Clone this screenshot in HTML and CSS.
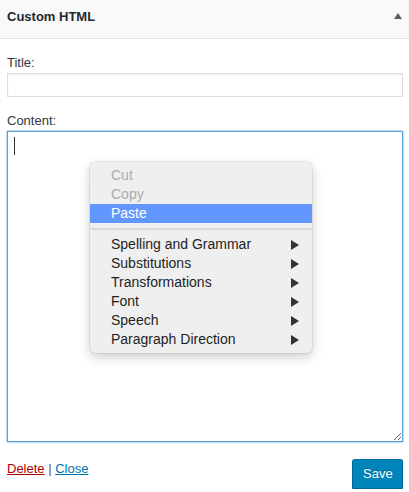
FILE: index.html
```html
<!DOCTYPE html>
<html lang="en">
<head>
<meta charset="utf-8">
<title>Custom HTML widget</title>
<link rel="stylesheet" href="styles.css">
</head>
<body>
<div class="widget">
  <div class="widget-top">
    <h3 class="widget-title">Custom HTML</h3>
    <svg class="toggle" width="8" height="6" viewBox="0 0 8 6" aria-hidden="true"><polygon points="4,0 8,6 0,6" fill="#555d66"/></svg>
  </div>
  <form class="widget-inside">
    <label class="field-label" for="title">Title:</label>
    <input class="field-input" id="title" type="text">
    <label class="field-label content-label" for="content">Content:</label>
    <div class="editor">
      <textarea class="field-textarea" id="content"></textarea>
      <span class="caret"></span>
      <ul class="context-menu">
        <li class="menu-item disabled">Cut</li>
        <li class="menu-item disabled">Copy</li>
        <li class="menu-item active">Paste</li>
        <li class="menu-sep"></li>
        <li class="menu-item">Spelling and Grammar<svg class="sub" width="8" height="10" viewBox="0 0 8 10"><polygon points="0,0 8,5 0,10" fill="#333"/></svg></li>
        <li class="menu-item">Substitutions<svg class="sub" width="8" height="10" viewBox="0 0 8 10"><polygon points="0,0 8,5 0,10" fill="#333"/></svg></li>
        <li class="menu-item">Transformations<svg class="sub" width="8" height="10" viewBox="0 0 8 10"><polygon points="0,0 8,5 0,10" fill="#333"/></svg></li>
        <li class="menu-item">Font<svg class="sub" width="8" height="10" viewBox="0 0 8 10"><polygon points="0,0 8,5 0,10" fill="#333"/></svg></li>
        <li class="menu-item">Speech<svg class="sub" width="8" height="10" viewBox="0 0 8 10"><polygon points="0,0 8,5 0,10" fill="#333"/></svg></li>
        <li class="menu-item">Paragraph Direction<svg class="sub" width="8" height="10" viewBox="0 0 8 10"><polygon points="0,0 8,5 0,10" fill="#333"/></svg></li>
      </ul>
    </div>
    <div class="widget-actions">
      <div class="links"><a class="delete" href="#">Delete</a> | <a class="close" href="#">Close</a></div>
      <button class="save" type="button">Save</button>
    </div>
  </form>
</div>
</body>
</html>
```

FILE: styles.css
```css
html, body {
  margin: 0;
  padding: 0;
  background: #fff;
}
body {
  font-family: "Liberation Sans", Arial, sans-serif;
  font-size: 13px;
  color: #32373c;
  width: 409px;
}
.widget {
  display: flex;
  flex-direction: column;
}
.widget-top {
  height: 38px;
  background: #f9f9f9;
  border-bottom: 1px solid #e5e5e5;
  display: flex;
  align-items: center;
  justify-content: space-between;
  padding: 0 7px 0 7px;
}
.widget-title {
  margin: 0;
  font-size: 13px;
  font-weight: bold;
  color: #23282d;
  line-height: 18px;
  position: relative;
  top: -2px;
}
.toggle {
  display: block;
  position: relative;
  top: -3px;
}
.widget-inside {
  display: flex;
  flex-direction: column;
  padding: 15px 6px 0 7px;
  margin: 0;
}
.field-label {
  display: block;
  line-height: 18px;
  color: #32373c;
  margin-bottom: 1px;
}
.content-label {
  margin-top: 15px;
}
.field-input {
  box-sizing: border-box;
  width: 396px;
  height: 24px;
  margin: 0;
  border: 1px solid #ddd;
  box-shadow: inset 0 1px 2px rgba(0,0,0,.07);
  background: #fff;
  font: inherit;
  padding: 2px 5px;
}
.editor {
  position: relative;
  width: 396px;
  height: 311px;
}
.field-textarea {
  box-sizing: border-box;
  display: block;
  width: 396px;
  height: 311px;
  margin: 0;
  border: 1px solid #5b9dd9;
  box-shadow: 0 0 2px rgba(30,140,190,.8);
  background: #fff;
  resize: vertical;
  font: inherit;
  padding: 4px 6px;
  outline: none;
}
.caret {
  position: absolute;
  left: 7px;
  top: 6px;
  width: 1px;
  height: 18px;
  background: #333;
}
.context-menu {
  position: absolute;
  left: 83px;
  top: 31px;
  width: 222px;
  margin: 0;
  padding: 4px 0;
  list-style: none;
  background: #efefef;
  border-radius: 5px;
  box-shadow: 0 0 0 0.5px rgba(0,0,0,.12), 0 4px 12px rgba(0,0,0,.2);
  font-size: 14px;
  color: #1e1e1e;
}
.menu-item {
  display: flex;
  align-items: center;
  justify-content: space-between;
  height: 19px;
  line-height: 19px;
  padding: 0 13px 0 21px;
}
.menu-item.disabled {
  color: #acacac;
}
.menu-item.active {
  background: #6297ff;
  color: #fff;
}
.menu-sep {
  height: 2px;
  background: #dadada;
  margin: 5px 0 5px 0;
}
.sub {
  display: block;
}
.widget-actions {
  display: flex;
  justify-content: space-between;
  align-items: flex-start;
  margin-top: 17px;
  width: 396px;
}
.links {
  line-height: 18px;
  padding-top: 1px;
  color: #555;
}
.delete {
  color: #a00;
  text-decoration: underline;
}
.close {
  color: #0073aa;
  text-decoration: underline;
}
.save {
  box-sizing: border-box;
  height: 30px;
  width: 51px;
  padding: 0 10px;
  margin: 0;
  background: #0085ba;
  border: 1px solid;
  border-color: #0073aa #006799 #006799;
  border-radius: 3px;
  box-shadow: 0 1px 0 #006799;
  color: #fff;
  font-family: inherit;
  font-size: 13px;
  line-height: 28px;
  text-shadow: 0 -1px 1px #006799;
}
```
